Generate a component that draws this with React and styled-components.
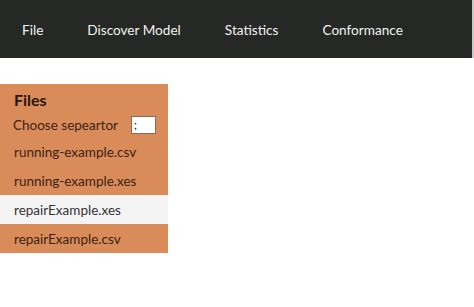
import styled, { createGlobalStyle } from "styled-components";

const GlobalStyle = createGlobalStyle`
  body {
    margin: 0;
    background: #ffffff;
    font-family: Lato, "Open Sans", sans-serif;
  }
`;

const files = [
  { name: "running-example.csv", active: false },
  { name: "running-example.xes", active: false },
  { name: "repairExample.xes", active: true },
  { name: "repairExample.csv", active: false },
];

const App = () => {
  return (
    <Page>
      <GlobalStyle />
      <NavBar>
        <NavItem>File</NavItem>
        <NavItem>Discover Model</NavItem>
        <NavItem>Statistics</NavItem>
        <NavItem>Conformance</NavItem>
      </NavBar>
      <Sidebar>
        <Title>Files</Title>
        <SepRow>
          <span>Choose sepeartor</span>
          <SepInput defaultValue=";" />
        </SepRow>
        {files.map((f) => (
          <FileItem key={f.name} active={f.active}>
            {f.name}
          </FileItem>
        ))}
      </Sidebar>
    </Page>
  );
};

export default App;

const Page = styled.div`
  width: 474px;
  height: 307px;
`;

const NavBar = styled.div`
  display: flex;
  align-items: center;
  height: 58px;
  width: 472px;
  background: #262825;
  border-right: 2px solid #c8c8c8;
`;

const NavItem = styled.div`
  padding: 0 22px;
  color: #f1f1f1;
  font-size: 13.6px;
  line-height: 18px;
  margin-top: 1px;
`;

const Sidebar = styled.div`
  margin-top: 26px;
  width: 168px;
  background: #d98b5a;
  display: flex;
  flex-direction: column;
  color: #3b1f12;
`;

const Title = styled.div`
  padding: 6px 14px 0;
  font-size: 16px;
  font-weight: 700;
  height: 22px;
  line-height: 20px;
  color: #2a1510;
`;

const SepRow = styled.div`
  display: flex;
  align-items: center;
  padding: 0 12px 0 13px;
  height: 25px;
  font-size: 13.5px;
  gap: 13px;
`;

const SepInput = styled.input`
  width: 25px;
  height: 18px;
  box-sizing: border-box;
  border: 1px solid #8a6a58;
  background: #ffffff;
  padding: 0 2px;
  font-size: 11px;
  font-family: Lato, sans-serif;
  outline: none;
`;

const FileItem = styled.div`
  height: 29px;
  display: flex;
  align-items: center;
  padding: 0 14px;
  font-size: 13.5px;
  color: ${(p) => (p.active ? "#333333" : "#3b1f12")};
  background: ${(p) => (p.active ? "#f5f4f5" : "#d98b5a")};
`;
